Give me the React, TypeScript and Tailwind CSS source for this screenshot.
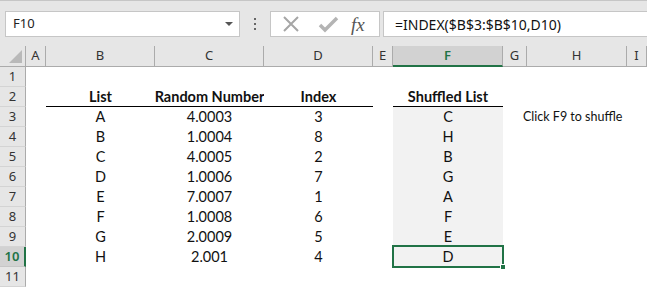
import { Fragment } from "react";

const columns = [
  { key: "A", width: "w-[20px]" },
  { key: "B", width: "w-[109px]" },
  { key: "C", width: "w-[109px]" },
  { key: "D", width: "w-[109px]" },
  { key: "E", width: "w-[20px]" },
  { key: "F", width: "w-[110px]" },
  { key: "G", width: "w-[24px]" },
  { key: "H", width: "w-[100px]" },
  { key: "I", width: "w-[20px]" },
];

type Row = Record<string, string>;

const rows: Row[] = [
  {},
  { B: "List", C: "Random Number", D: "Index", F: "Shuffled List" },
  { B: "A", C: "4.0003", D: "3", F: "C", G: "Click F9 to shuffle" },
  { B: "B", C: "1.0004", D: "8", F: "H" },
  { B: "C", C: "4.0005", D: "2", F: "B" },
  { B: "D", C: "1.0006", D: "7", F: "G" },
  { B: "E", C: "7.0007", D: "1", F: "A" },
  { B: "F", C: "1.0008", D: "6", F: "F" },
  { B: "G", C: "2.0009", D: "5", F: "E" },
  { B: "H", C: "2.001", D: "4", F: "D" },
  {},
];

const uiFont = "font-['Noto_Sans',sans-serif]";
const cellFont = "font-['Lato',sans-serif]";

function Toolbar() {
  return (
    <div className="flex h-[46px] items-start border-t border-[#c6c6c6] bg-[#e6e6e6] pt-[10px]">
      <div className={`ml-[5px] flex h-[26px] w-[235px] items-center justify-between border border-[#c6c6c6] bg-white pl-[7px] pr-[6px] text-[13px] text-[#222] ${uiFont}`}>
        <span>F10</span>
        <span className="h-0 w-0 border-x-[4px] border-t-[4px] border-x-transparent border-t-[#555]" />
      </div>
      <div className="flex h-[26px] w-[30px] flex-col items-center justify-center gap-[3px]">
        <span className="h-[2px] w-[2px] bg-[#666]" />
        <span className="h-[2px] w-[2px] bg-[#666]" />
        <span className="h-[2px] w-[2px] bg-[#666]" />
      </div>
      <div className="flex h-[26px] w-[110px] items-center border border-[#c6c6c6] bg-white">
        <svg className="ml-[9px]" width="22" height="22" viewBox="0 0 22 22">
          <path d="M4 4 L18 18 M18 4 L4 18" stroke="#a6a6a6" strokeWidth="2" fill="none" />
        </svg>
        <svg className="ml-[15px]" width="22" height="22" viewBox="0 0 22 22">
          <path d="M3 12 L8 17 L20 5" stroke="#b4b4b4" strokeWidth="3.5" fill="none" />
        </svg>
        <span className="ml-[12px] font-['Liberation_Serif',serif] text-[19px] italic leading-none text-[#555]">
          fx
        </span>
      </div>
      <div className={`ml-[3px] flex h-[26px] flex-1 items-center border-y border-l border-[#c6c6c6] bg-white pl-[11px] text-[14px] text-[#111] ${uiFont}`}>
        =INDEX($B$3:$B$10,D10)
      </div>
    </div>
  );
}

function HeaderRow() {
  return (
    <div className={`flex h-[21px] bg-[#e6e6e6] text-[13px] text-[#333] ${uiFont}`}>
      <div className="relative w-[26px] border-r border-b border-[#ababab]">
        <span className="absolute bottom-[3px] right-[3px] h-0 w-0 border-b-[13px] border-l-[13px] border-b-[#b9b9b9] border-l-transparent" />
      </div>
      {columns.map((col) =>
        col.key === "F" ? (
          <div
            key={col.key}
            className={`${col.width} flex items-center justify-center border-r border-b-2 border-r-[#ababab] border-b-[#217346] bg-[#d2d2d2] font-semibold text-[#217346]`}
          >
            {col.key}
          </div>
        ) : (
          <div
            key={col.key}
            className={`${col.width} flex items-center justify-center border-r border-b border-[#ababab]`}
          >
            {col.key}
          </div>
        ),
      )}
    </div>
  );
}

function Cell({ col, row, index }: { col: (typeof columns)[number]; row: Row; index: number }) {
  const value = row[col.key];
  const isHeader = index === 1;
  const shaded = col.key === "F" && index >= 2 && index <= 9;
  const underline = isHeader && ["B", "C", "D", "F"].includes(col.key);
  const selected = col.key === "F" && index === 9;

  if (col.key === "G" && value) {
    return (
      <div className={`${col.width} relative z-10 flex h-[20px] items-center`}>
        <span className="absolute left-[20px] whitespace-nowrap text-[12.5px] text-[#111]">{value}</span>
      </div>
    );
  }

  return (
    <div
      className={`${col.width} relative flex h-[20px] items-center justify-center whitespace-nowrap text-[14.5px] text-[#111] ${
        shaded ? "bg-[#f2f2f2]" : "bg-white"
      } ${underline ? "border-b border-black" : ""} ${isHeader ? "font-bold" : ""} ${selected ? "z-10" : ""}`}
    >
      {value}
      {selected && (
        <>
          <span className="absolute -top-[2px] -bottom-[1px] -left-[1px] -right-[1px] border-2 border-[#217346]" />
          <span className="absolute -right-[3px] -bottom-[3px] h-[6px] w-[6px] border border-white bg-[#217346]" />
        </>
      )}
    </div>
  );
}

export default function App() {
  return (
    <div className="h-[288px] w-[647px] overflow-hidden bg-white">
      <Toolbar />
      <HeaderRow />
      <div className={cellFont}>
        {rows.map((row, index) => {
          const current = index === 9;
          return (
            <div key={index} className="flex h-[20px]">
              {current ? (
                <div className={`flex w-[26px] items-center justify-center border-r-2 border-b border-r-[#217346] border-b-[#c6c6c6] bg-[#d2d2d2] text-[13px] font-semibold text-[#217346] ${uiFont}`}>
                  {index + 1}
                </div>
              ) : (
                <div className={`flex w-[26px] items-center justify-center border-r border-b border-r-[#ababab] border-b-[#d4d4d4] bg-[#e6e6e6] text-[13px] text-[#333] ${uiFont}`}>
                  {index + 1}
                </div>
              )}
              {columns.map((col) => (
                <Fragment key={col.key}>
                  <Cell col={col} row={row} index={index} />
                </Fragment>
              ))}
            </div>
          );
        })}
      </div>
    </div>
  );
}
